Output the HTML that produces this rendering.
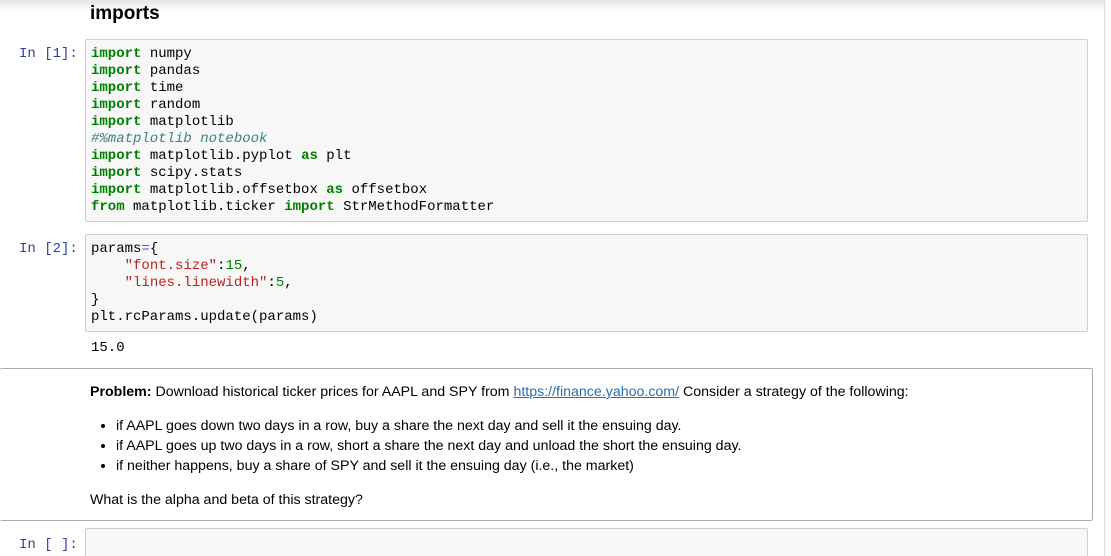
<!DOCTYPE html>
<html style="overflow:hidden;height:556px"><head><meta charset="utf-8"><style>
body{margin:0;width:1111px;height:556px;overflow:hidden;background:#fff;position:relative;font-family:"Liberation Sans",sans-serif;}
.abs{position:absolute}
.shadow{left:0;top:0;width:1104px;height:12px;background:linear-gradient(#e6e6e6,#fff);}
.sb{left:1104px;top:0;width:7px;height:556px;background:#fafafa;border-left:1px solid #e0e0e0;}
.box{background:#f7f7f7;border:1px solid #cfcfcf;border-radius:2px;left:85px;width:1001px;}
pre{margin:0;font-family:"Liberation Mono",monospace;font-size:14px;line-height:17px;color:#000;}
.p{font-family:"Liberation Mono",monospace;font-size:14px;color:#303F9F;left:19px;}
.k{color:#008000;font-weight:bold}
.c{color:#408080;font-style:italic}
.s{color:#BA2121}
.n{color:#008000}
.o{color:#AA22FF}
.md{left:0;top:368px;width:1092px;height:151px;border:1px solid #ababab;border-left:none;border-radius:2px;}
.t{font-size:14.2px;color:#000;left:90px;}
ul{margin:0;padding-left:26px}
li{line-height:20px}
a{color:#296eaa}
</style></head><body>
<div class="abs shadow"></div>
<div class="abs sb"></div>
<div class="abs" style="left:90px;top:3px;font-size:19px;font-weight:bold;">imports</div>

<div class="abs p" style="top:46px">In&nbsp;[1]:</div>
<div class="abs box" style="top:39px;height:181px"></div>
<pre class="abs" style="left:91px;top:46px"><span class="k">import</span> numpy
<span class="k">import</span> pandas
<span class="k">import</span> time
<span class="k">import</span> random
<span class="k">import</span> matplotlib
<span class="c">#%matplotlib notebook</span>
<span class="k">import</span> matplotlib.pyplot <span class="k">as</span> plt
<span class="k">import</span> scipy.stats
<span class="k">import</span> matplotlib.offsetbox <span class="k">as</span> offsetbox
<span class="k">from</span> matplotlib.ticker <span class="k">import</span> StrMethodFormatter</pre>

<div class="abs p" style="top:241px">In&nbsp;[2]:</div>
<div class="abs box" style="top:234px;height:96px"></div>
<pre class="abs" style="left:91px;top:241px">params<span class="o">=</span>{
    <span class="s">"font.size"</span>:<span class="n">15</span>,
    <span class="s">"lines.linewidth"</span>:<span class="n">5</span>,
}
plt.rcParams.update(params)</pre>
<pre class="abs" style="left:91px;top:340px">15.0</pre>

<div class="abs md"></div>
<div class="abs t" style="top:384px"><b>Problem:</b> Download historical ticker prices for AAPL and SPY from <a href="#">https://finance.yahoo.com/</a> Consider a strategy of the following:</div>
<div class="abs t" style="top:416px"><ul>
<li>if AAPL goes down two days in a row, buy a share the next day and sell it the ensuing day.</li>
<li>if AAPL goes up two days in a row, short a share the next day and unload the short the ensuing day.</li>
<li>if neither happens, buy a share of SPY and sell it the ensuing day (i.e., the market)</li></ul></div>
<div class="abs t" style="top:492px">What is the alpha and beta of this strategy?</div>

<div class="abs p" style="top:537px">In&nbsp;[&nbsp;]:</div>
<div class="abs box" style="top:528px;height:40px"></div>
</body></html>
